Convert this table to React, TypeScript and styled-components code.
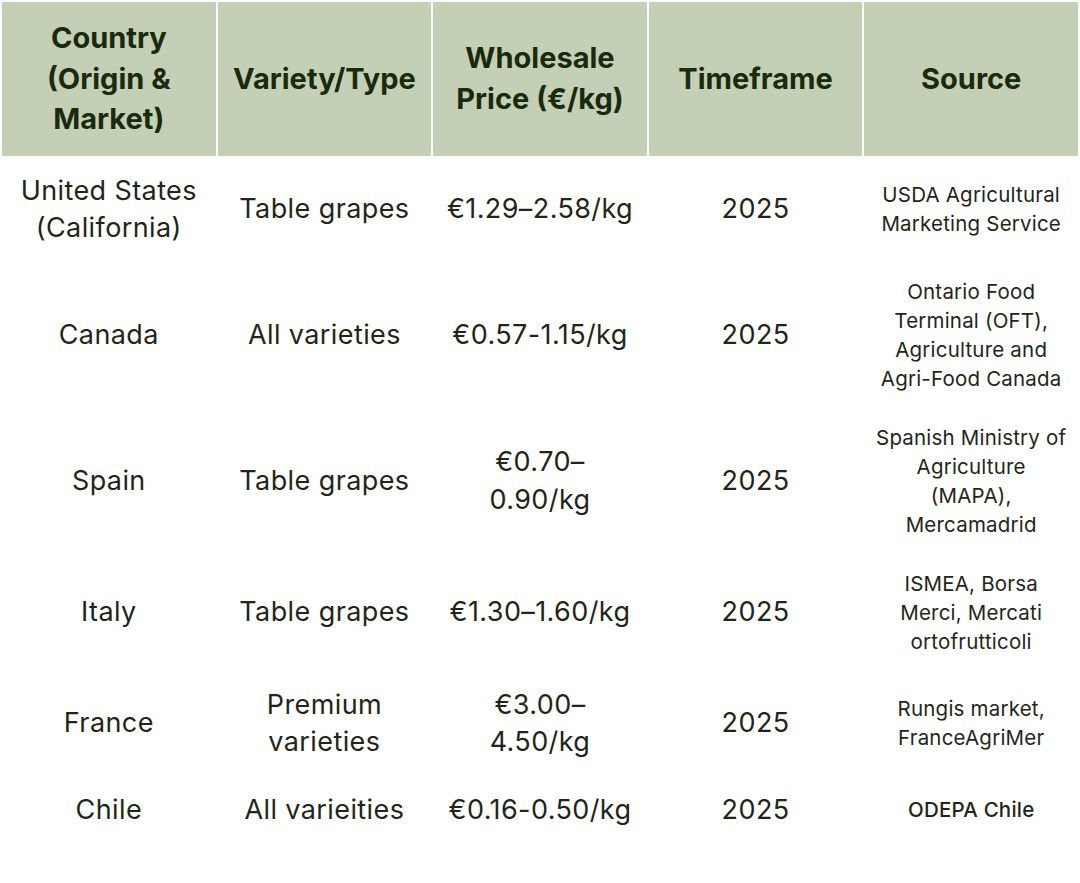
import styled, { createGlobalStyle } from "styled-components";

type Row = {
  country: string;
  variety: string;
  price: string;
  timeframe: string;
  source: string;
  sourceWeight?: number;
};

const rows: Row[] = [
  {
    country: "United States\n(California)",
    variety: "Table grapes",
    price: "€1.29–2.58/kg",
    timeframe: "2025",
    source: "USDA Agricultural\nMarketing Service",
  },
  {
    country: "Canada",
    variety: "All varieties",
    price: "€0.57-1.15/kg",
    timeframe: "2025",
    source: "Ontario Food\nTerminal (OFT),\nAgriculture and\nAgri-Food Canada",
  },
  {
    country: "Spain",
    variety: "Table grapes",
    price: "€0.70–\n0.90/kg",
    timeframe: "2025",
    source: "Spanish Ministry of\nAgriculture\n(MAPA),\nMercamadrid",
  },
  {
    country: "Italy",
    variety: "Table grapes",
    price: "€1.30–1.60/kg",
    timeframe: "2025",
    source: "ISMEA, Borsa\nMerci, Mercati\nortofrutticoli",
  },
  {
    country: "France",
    variety: "Premium\nvarieties",
    price: "€3.00–\n4.50/kg",
    timeframe: "2025",
    source: "Rungis market,\nFranceAgriMer",
  },
  {
    country: "Chile",
    variety: "All varieities",
    price: "€0.16-0.50/kg",
    timeframe: "2025",
    source: "ODEPA Chile",
    sourceWeight: 500,
  },
];

const headers = [
  "Country\n(Origin &\nMarket)",
  "Variety/Type",
  "Wholesale\nPrice (€/kg)",
  "Timeframe",
  "Source",
];

export default function App() {
  return (
    <>
      <GlobalStyle />
      <PriceTable>
        <colgroup>
          {headers.map((h) => (
            <col key={h} />
          ))}
        </colgroup>
        <thead>
          <tr>
            {headers.map((h) => (
              <HeadCell key={h}>{h}</HeadCell>
            ))}
          </tr>
        </thead>
        <tbody>
          {rows.map((r) => (
            <tr key={r.country}>
              <Cell>{r.country}</Cell>
              <Cell>{r.variety}</Cell>
              <Cell>{r.price}</Cell>
              <Cell>{r.timeframe}</Cell>
              <SourceCell $weight={r.sourceWeight ?? 400}>{r.source}</SourceCell>
            </tr>
          ))}
        </tbody>
      </PriceTable>
    </>
  );
}

const GlobalStyle = createGlobalStyle`
  body {
    margin: 0;
    background: #ffffff;
    font-family: Inter, "Noto Sans", sans-serif;
  }
`;

const PriceTable = styled.table`
  width: 1080px;
  table-layout: fixed;
  border-collapse: separate;
  border-spacing: 2px;
  color: #1f2619;

  col {
    width: 20%;
  }
`;

const HeadCell = styled.th`
  background: #c3d0b6;
  color: #1a2a0c;
  font-size: 29px;
  font-weight: 700;
  line-height: 40.5px;
  padding: 16px 4px;
  text-align: center;
  vertical-align: middle;
  white-space: pre-line;
`;

const Cell = styled.td`
  font-size: 27px;
  letter-spacing: 0.4px;
  line-height: 37.5px;
  padding: 14px 4px;
  text-align: center;
  vertical-align: middle;
  white-space: pre-line;
`;

const SourceCell = styled(Cell)<{ $weight: number }>`
  font-size: 20.5px;
  letter-spacing: 0.2px;
  line-height: 29px;
  font-weight: ${(p) => p.$weight};
`;
